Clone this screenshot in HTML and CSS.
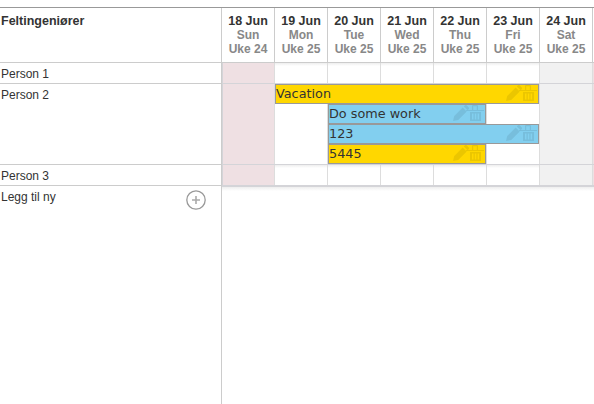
FILE: index.html
```html
<!DOCTYPE html>
<html lang="en">
<head>
  <meta charset="UTF-8">
  <title>Feltingeniører</title>
  <link rel="stylesheet" href="styles.css">
</head>
<body>
  <svg class="defs" width="0" height="0">
    <symbol id="pencil" viewBox="0 0 16 16">
      <path d="M0 16l1.200-5L9.700 2.500l4 4L5.200 15zM10.800 1.400L12 .3q.8-.6 1.600 0l2.200 2.200q.6.8 0 1.600l-1.100 1.200z" fill="currentColor"/>
    </symbol>
    <symbol id="trash" viewBox="0 0 18 16">
      <path d="M6 5V1q0-1 1-1h4q1 0 1 1v4h6v1H0V5zM7.200 1.200V5h3.600V1.200zM4 7h11v9H4zM6 8.500v6h1.500v-6zM8.800 8.500v6h1.500v-6zM11.600 8.500v6h1.500v-6z" fill="currentColor" fill-rule="evenodd"/>
    </symbol>
  </svg>

  <div class="scheduler">
    <div class="side">
      <div class="side-title">Feltingeniører</div>
      <div class="person">Person 1</div>
      <div class="person person-tall">Person 2</div>
      <div class="person">Person 3</div>
      <div class="add-row">
        <span>Legg til ny</span>
        <svg class="add-icon" width="20" height="20" viewBox="0 0 20 20">
          <circle cx="10" cy="10" r="9.200" fill="none" stroke="#999" stroke-width="1.300"/>
          <path d="M10 6v8M6 10h8" stroke="#aaa" stroke-width="1.600"/>
        </svg>
      </div>
    </div>

    <div class="main">
      <div class="days">
        <div class="day"><b>18 Jun</b>Sun<br>Uke 24</div>
        <div class="day"><b>19 Jun</b>Mon<br>Uke 25</div>
        <div class="day"><b>20 Jun</b>Tue<br>Uke 25</div>
        <div class="day"><b>21 Jun</b>Wed<br>Uke 25</div>
        <div class="day"><b>22 Jun</b>Thu<br>Uke 25</div>
        <div class="day"><b>23 Jun</b>Fri<br>Uke 25</div>
        <div class="day"><b>24 Jun</b>Sat<br>Uke 25</div>
      </div>

      <div class="row row-short">
        <div class="cell sunday first"></div><div class="cell"></div><div class="cell"></div><div class="cell"></div><div class="cell"></div><div class="cell"></div><div class="cell saturday"></div><div class="cell sunday"></div>
      </div>

      <div class="row row-events">
        <div class="cell sunday first c1"></div><div class="cell c2"></div><div class="cell c3"></div><div class="cell c4"></div><div class="cell c5"></div><div class="cell c6"></div><div class="cell saturday c7"></div><div class="cell sunday c8"></div>
        <div class="event yellow ev-a">Vacation<span class="tools"><svg class="ico-p"><use href="#pencil"/></svg><svg class="ico-t"><use href="#trash"/></svg></span></div>
        <div class="event blue ev-b">Do some work<span class="tools"><svg class="ico-p"><use href="#pencil"/></svg><svg class="ico-t"><use href="#trash"/></svg></span></div>
        <div class="event blue ev-c">123<span class="tools"><svg class="ico-p"><use href="#pencil"/></svg><svg class="ico-t"><use href="#trash"/></svg></span></div>
        <div class="event yellow ev-d">5445<span class="tools"><svg class="ico-p"><use href="#pencil"/></svg><svg class="ico-t"><use href="#trash"/></svg></span></div>
      </div>

      <div class="row row-short row-last">
        <div class="cell sunday first"></div><div class="cell"></div><div class="cell"></div><div class="cell"></div><div class="cell"></div><div class="cell"></div><div class="cell saturday"></div><div class="cell sunday"></div>
      </div>
      <div class="table-end"></div>
    </div>
  </div>
</body>
</html>
```

FILE: styles.css
```css
body {
  margin: 0;
  padding-top: 7px;
  height: 397px;
  overflow: hidden;
  background-color: #fff;
  font-family: "Liberation Sans", Arial, sans-serif;
  font-size: 12px;
  color: #333;
}
.defs {
  display: block;
  height: 0;
}
.scheduler {
  display: flex;
  height: 397px;
  border-top: 1px solid #999;
  box-sizing: border-box;
}
.side {
  width: 222px;
  flex: none;
  box-sizing: border-box;
  border-right: 1px solid #ccc;
}
.side-title {
  box-sizing: border-box;
  height: 55px;
  padding: 6px 0 0 1px;
  font-size: 12.5px;
  font-weight: bold;
  border-bottom: 1px solid #ccc;
}
.person {
  box-sizing: border-box;
  height: 21px;
  line-height: 22px;
  padding-left: 1px;
  border-bottom: 1px solid #ccc;
}
.person-tall {
  height: 81px;
}
.add-row {
  display: flex;
  justify-content: space-between;
  align-items: flex-start;
  padding: 4px 15px 0 1px;
}
.add-icon {
  display: block;
}
.main {
  width: 372px;
  flex: none;
  overflow: hidden;
}
.days {
  display: grid;
  grid-template-columns: repeat(7, 53px);
  box-sizing: border-box;
  height: 55px;
  border-bottom: 1px solid #ccc;
}
.day {
  padding-top: 6px;
  text-align: center;
  font-weight: bold;
  line-height: 14px;
  color: #888;
  border-right: 1px solid #ccc;
  box-sizing: border-box;
}
.day b {
  display: block;
  font-size: 12.5px;
  color: #333;
}
.row {
  display: grid;
  grid-template-columns: repeat(7, 53px) 1px;
  box-sizing: border-box;
  border-bottom: 1px solid #d4d4d8;
}
.row-short {
  height: 21px;
  background-image: linear-gradient(#eee, #fff 3px);
}
.row-last {
  height: 22px;
  border-bottom-width: 2px;
}
.row-events {
  grid-template-rows: repeat(4, 20px);
  height: 81px;
}
.table-end {
  height: 4px;
  background-image: linear-gradient(#eee, #fff);
}
.cell {
  border-right: 1px solid #ddd;
  box-sizing: border-box;
}
.row-events .cell {
  grid-row: 1 / -1;
}
.c1 { grid-column: 1; }
.c2 { grid-column: 2; }
.c3 { grid-column: 3; }
.c4 { grid-column: 4; }
.c5 { grid-column: 5; }
.c6 { grid-column: 6; }
.c7 { grid-column: 7; }
.c8 { grid-column: 8; }
.sunday {
  background-color: #efe0e3;
}
.sunday:last-child,
.c8 {
  border: none;
}
.first {
  border-left: 1px solid #d4d4d8;
}
.saturday {
  background-color: #f1f1f1;
}
.event {
  display: flex;
  justify-content: space-between;
  align-items: flex-start;
  box-sizing: border-box;
  height: 20px;
  margin-right: 1px;
  border: 1px solid #999;
  font-family: "DejaVu Sans", Verdana, sans-serif;
  font-size: 12.8px;
  line-height: 18px;
  color: #333;
  z-index: 1;
}
.yellow {
  background-color: #ffd700;
}
.blue {
  background-color: #82cfef;
}
.ev-a { grid-column: 2 / 7; grid-row: 1; }
.ev-b { grid-column: 3 / 6; grid-row: 2; }
.ev-c { grid-column: 3 / 7; grid-row: 3; }
.ev-d { grid-column: 3 / 6; grid-row: 4; }
.tools {
  display: flex;
  padding-right: 1px;
  color: rgba(0, 0, 0, 0.08);
}
.ico-p {
  width: 16px;
  height: 16px;
}
.ico-t {
  width: 18px;
  height: 16px;
  margin-left: -3px;
}
```
